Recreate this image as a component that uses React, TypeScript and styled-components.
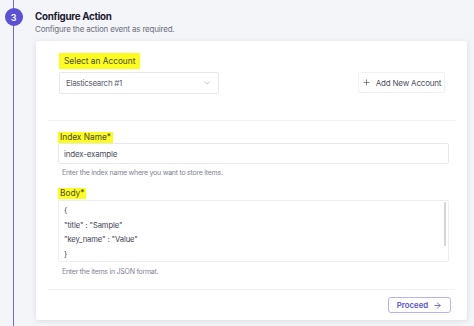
import React from "react";
import styled, { createGlobalStyle } from "styled-components";
import { ChevronDown, Plus, ArrowRight } from "lucide-react";

const Global = createGlobalStyle`
  html, body { margin: 0; padding: 0; background: #f4f5f9; }
  body { font-family: Inter, "Noto Sans", sans-serif; color: #1f2330; }
  * { box-sizing: border-box; }
`;

const Page = styled.div`
  width: 474px;
  height: 326px;
  overflow: hidden;
  display: flex;
  background: #f4f5f9;
`;

const Rail = styled.div`
  position: relative;
  width: 27px;
  flex: none;
  display: flex;
  flex-direction: column;
  align-items: center;
  &::before {
    content: "";
    position: absolute;
    left: 12.5px;
    top: 0;
    bottom: 0;
    width: 1.5px;
    background: #7466e3;
  }
`;

const StepCircle = styled.div`
  position: relative;
  margin-top: 8px;
  width: 18px;
  height: 18px;
  border-radius: 50%;
  background: #5b50d6;
  color: #fff;
  font-size: 9px;
  font-weight: 600;
  display: flex;
  align-items: center;
  justify-content: center;
`;

const Main = styled.div`
  flex: 1;
  padding: 10px 7px 0 8px;
  display: flex;
  flex-direction: column;
`;

const Title = styled.div`
  font-size: 9.8px;
  font-weight: 700;
  letter-spacing: -0.3px;
  color: #1d2130;
  line-height: 13px;
`;

const Subtitle = styled.div`
  font-size: 8px;
  letter-spacing: -0.2px;
  color: #6b6f7b;
  line-height: 11px;
  margin-top: 1px;
`;

const Card = styled.div`
  margin-top: 6px;
  margin-left: 1px;
  height: 279px;
  background: #fff;
  border-radius: 2px;
  box-shadow: 0 1px 5px rgba(30, 35, 60, 0.12);
  padding: 12px 12px 0;
  display: flex;
  flex-direction: column;
`;

const AccountRow = styled.div`
  display: flex;
  align-items: flex-end;
  justify-content: space-between;
  padding: 0 10px 0 11px;
`;

const FieldCol = styled.div`
  display: flex;
  flex-direction: column;
`;

const Label = styled.span<{ $pad?: boolean }>`
  align-self: flex-start;
  background: #fcfc1e;
  color: #4a4a2c;
  font-size: 8.3px;
  font-weight: 400;
  line-height: ${(p) => (p.$pad ? "16px" : "11px")};
  padding: 0 ${(p) => (p.$pad ? "5px" : "2px")};
`;

const SelectBox = styled.div`
  margin-top: 3px;
  width: 160px;
  height: 22px;
  border: 1px solid #e6e8ee;
  border-radius: 2px;
  display: flex;
  align-items: center;
  justify-content: space-between;
  padding: 0 6px 0 6px;
  font-size: 8px;
  letter-spacing: -0.3px;
  color: #5d616d;
`;

const AddButton = styled.div`
  height: 21px;
  width: 87px;
  margin-bottom: 1px;
  border: 1px solid #f0f1f5;
  border-radius: 2px;
  display: flex;
  align-items: center;
  justify-content: center;
  gap: 5px;
  font-size: 8px;
  letter-spacing: -0.2px;
  color: #4b4f5b;
`;

const Divider = styled.div<{ $top: number }>`
  margin-top: ${(p) => p.$top}px;
  height: 1px;
  background: #f0f1f4;
`;

const Fields = styled.div`
  padding: 0 6px 0 10px;
  display: flex;
  flex-direction: column;
`;

const Input = styled.div`
  height: 21px;
  border: 1px solid #e6e8ee;
  border-radius: 2px;
  display: flex;
  align-items: center;
  padding: 0 5px;
  font-size: 8px;
  letter-spacing: -0.2px;
  color: #4b4f5b;
`;

const Helper = styled.div`
  font-size: 7px;
  letter-spacing: -0.25px;
  color: #80848f;
  line-height: 10px;
  padding-left: 4px;
`;

const TextArea = styled.div`
  position: relative;
  height: 62px;
  border: 1px solid #eceef2;
  border-radius: 2px;
  padding: 3px 5px 0;
  font-size: 7.6px;
  letter-spacing: -0.1px;
  color: #3e424e;
  line-height: 14.5px;
`;

const ScrollThumb = styled.div`
  position: absolute;
  right: 2px;
  top: 1px;
  width: 2px;
  height: 44px;
  background: #d3d5db;
  border-radius: 1px;
`;

const Footer = styled.div`
  display: flex;
  justify-content: flex-end;
  padding: 7px 4px 0 0;
`;

const ProceedButton = styled.div`
  width: 63px;
  height: 16px;
  border: 1px solid #b9b2f0;
  border-radius: 3px;
  display: flex;
  align-items: center;
  justify-content: center;
  gap: 5px;
  font-size: 7.8px;
  font-weight: 600;
  color: #5a4fcf;
`;

export default function App() {
  return (
    <>
      <Global />
      <Page>
        <Rail>
          <StepCircle>3</StepCircle>
        </Rail>
        <Main>
          <Title>Configure Action</Title>
          <Subtitle>Configure the action event as required.</Subtitle>
          <Card>
            <AccountRow>
              <FieldCol>
                <Label $pad>Select an Account</Label>
                <SelectBox>
                  <span>Elasticsearch #1</span>
                  <ChevronDown size={10} color="#9a9ea8" strokeWidth={1.5} />
                </SelectBox>
              </FieldCol>
              <AddButton>
                <Plus size={9} color="#4b4f5b" strokeWidth={1.8} />
                <span>Add New Account</span>
              </AddButton>
            </AccountRow>
            <Divider $top={26} />
            <Fields>
              <Label style={{ marginTop: 11 }}>Index Name*</Label>
              <Input>index-example</Input>
              <Helper style={{ marginTop: 4 }}>
                Enter the index name where you want to store items.
              </Helper>
              <Label style={{ marginTop: 10 }}>Body*</Label>
              <TextArea style={{ marginTop: 1 }}>
                <div>{"{"}</div>
                <div>"title" : "Sample"</div>
                <div>"key_name" : "Value"</div>
                <div>{"}"}</div>
                <ScrollThumb />
              </TextArea>
              <Helper style={{ marginTop: 5 }}>Enter the items in JSON format.</Helper>
            </Fields>
            <Divider $top={12} />
            <Footer>
              <ProceedButton>
                <span>Proceed</span>
                <ArrowRight size={9} strokeWidth={2.2} />
              </ProceedButton>
            </Footer>
          </Card>
        </Main>
      </Page>
    </>
  );
}
